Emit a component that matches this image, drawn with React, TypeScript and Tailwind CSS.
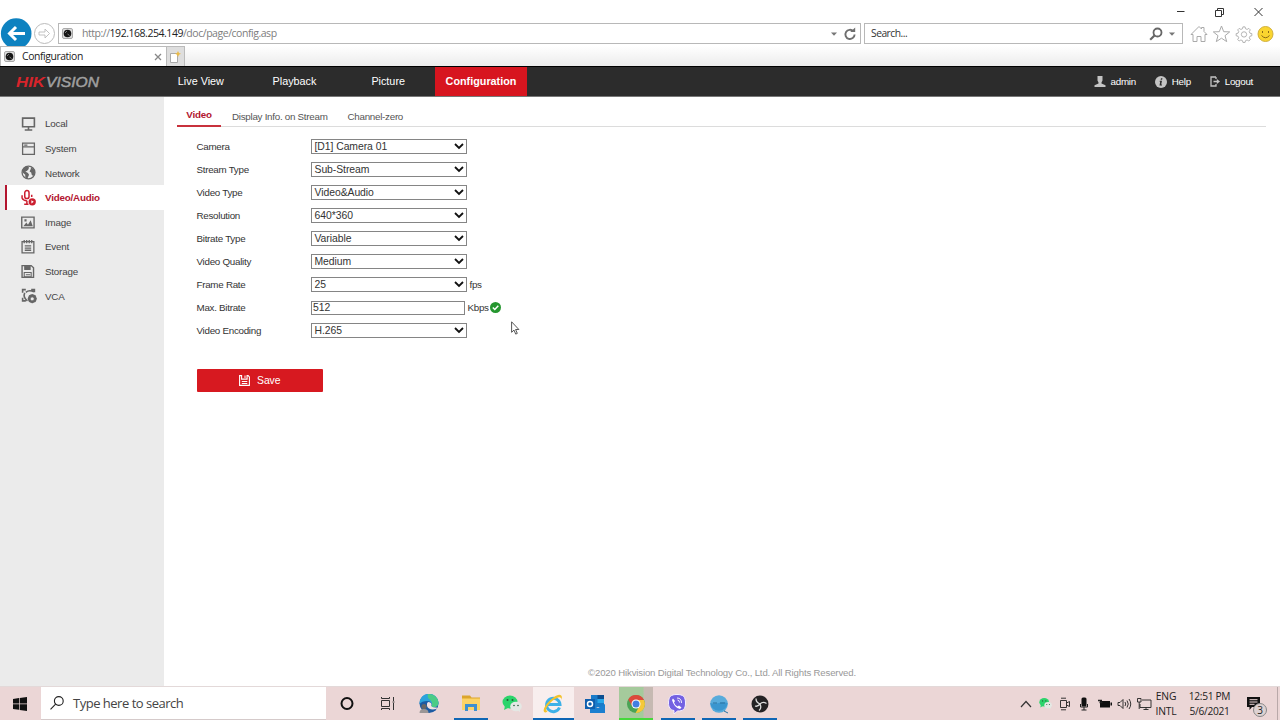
import React from 'react';

const arial = "font-['Liberation_Sans',Arial,sans-serif]";
const segoe = "font-['Open_Sans','Noto_Sans',sans-serif]";

const Favicon: React.FC = () => (
  <svg width="11" height="11" viewBox="0 0 11 11" className="shrink-0">
    <rect x=".5" y=".5" width="10" height="10" rx="1.5" fill="#ddd" stroke="#aaa" />
    <circle cx="5.5" cy="5.5" r="3.8" fill="#161616" />
    <path d="M3 5l2-2M5.5 6l2 1.5" stroke="#999" strokeWidth=".8" />
  </svg>
);

const Caret: React.FC = () => (
  <svg width="6" height="4" viewBox="0 0 6 4">
    <path d="M0 .5h6L3 3.8z" fill="#777" />
  </svg>
);

const TitleBar: React.FC = () => (
  <div className="flex h-[23px] items-center justify-end">
    <svg width="104" height="23" viewBox="0 0 104 23" fill="none" stroke="#333" strokeWidth="1">
      <path d="M1 11.500h7.500" />
      <path d="M39.500 10.500h6v6h-6zM41.500 10.500v-2h6v6h-2" />
      <path d="M78.500 8l8 8M86.500 8l-8 8" />
    </svg>
  </div>
);

const AddressBar: React.FC = () => (
  <div className="flex h-[23px] items-start">
    <div className="relative h-[23px] w-[58px] shrink-0 overflow-visible">
      <svg width="58" height="28" viewBox="0 0 58 28" fill="none" className="absolute left-0 -top-[5px] h-7">
        <circle cx="16.200" cy="15.500" r="15.300" fill="#0e82c0" />
        <path d="M25 15.500H10M16 9l-6.500 6.500L16 22" stroke="#fff" strokeWidth="3" />
        <circle cx="44.500" cy="15.500" r="10" stroke="#bbb" strokeWidth="1" />
        <path d="M39 14h6v-3l4.500 4.500-4.500 4.500v-3h-6z" stroke="#bbb" strokeWidth=".9" />
      </svg>
    </div>
    <div className="flex h-[21px] w-[803px] shrink-0 items-center border border-[#b8b8b8] bg-white pl-[3px]">
      <Favicon />
      <span className="ml-[9px] flex-1 whitespace-nowrap text-[10.500px] tracking-[-0.044em] text-[#7d7d7d]">
        http://<span className="text-[#222]">192.168.254.149</span>/doc/page/config.asp
      </span>
      <Caret />
      <svg width="14" height="14" viewBox="0 0 14 14" fill="none" className="mr-[3px] ml-1.5">
        <path d="M10.300 4.200A4.600 4.600 0 1 0 11.600 7.500" stroke="#6f6f6f" strokeWidth="1.900" />
        <path d="M7.200 5h5V.5z" fill="#6f6f6f" />
      </svg>
    </div>
    <div className="ml-[3px] flex h-[21px] w-[319px] shrink-0 items-center border border-[#b8b8b8] bg-white pl-1.5">
      <span className="flex-1 text-[10.300px] tracking-[-0.050em] text-[#333]">Search...</span>
      <svg width="14" height="14" viewBox="0 0 14 14" fill="none" stroke="#666">
        <circle cx="8.500" cy="5.500" r="4" strokeWidth="1.800" />
        <path d="M5.500 8.500L1.200 12.700" strokeWidth="2.200" />
      </svg>
      <span className="mr-[7px] ml-1.5">
        <Caret />
      </span>
    </div>
    <svg width="90" height="22" viewBox="0 0 90 22" fill="none" stroke="#aaa" strokeWidth="1" className="ml-1.5">
      <path d="M2 11.500l8-8 2.500 2.500V4.500h2.500v4l3 3h-2v7h-4v-5h-4v5H4v-7z" />
      <path d="M32.500 3l2.200 5.700 6 .2-4.700 3.800 1.700 5.900-5.200-3.400-5.200 3.400 1.700-5.900-4.700-3.800 6-.2z" />
      <g transform="translate(6.500 1.200) scale(.89)">
        <path d="M53.300 3h2.400l.5 2.100 1.800.8 1.900-1.200 1.700 1.700-1.200 1.900.8 1.800 2.100.5v2.400l-2.100.5-.8 1.800 1.200 1.900-1.700 1.700-1.900-1.200-1.800.8-.5 2h-2.400l-.5-2-1.800-.8-1.900 1.200-1.700-1.700 1.200-1.900-.8-1.800-2.100-.5v-2.400l2.100-.5.8-1.800-1.200-1.900 1.700-1.700 1.900 1.200 1.800-.8z" />
        <circle cx="54.500" cy="11.500" r="3" />
      </g>
      <circle cx="76.500" cy="11" r="7.500" fill="#fad52f" stroke="#d0b040" />
      <path d="M73.500 8v2M79.500 8v2M72.500 12.500q4 4.500 8 0" stroke="#8a6a16" />
    </svg>
  </div>
);

const BrowserTabs: React.FC = () => (
  <div className="relative flex h-5 bg-gradient-to-b from-white to-[#ececec]">
    <div className="flex w-[166px] items-center border-t border-l border-[#bbb] bg-white pl-[3px]">
      <Favicon />
      <span className="ml-[7px] flex-1 text-[10.400px] tracking-[-0.040em] text-[#222]">Configuration</span>
      <svg width="8" height="8" viewBox="0 0 8 8" className="mr-1" stroke="#888" strokeWidth="1.300">
        <path d="M1 1l6 6M7 1L1 7" />
      </svg>
    </div>
    <div className="flex w-[19px] items-center justify-center border border-b-0 border-[#bbb] bg-[#dedede]">
      <svg width="11" height="12" viewBox="0 0 11 12">
        <path d="M.5 2.500h7v9h-7z" fill="#fff" stroke="#aaa" />
        <path d="M8 0l1 2 2 .8-2 1L8 6 7 3.800l-2-1L7 2z" fill="#eabb48" />
      </svg>
    </div>
  </div>
);

const navItems = ['Live View', 'Playback', 'Picture'];

const NavBar: React.FC = () => (
  <div className={`flex h-[31px] items-stretch border-t border-b border-t-black border-b-[#777] bg-[#2c2c2c] text-white ${arial}`}>
    <svg width="154" height="29" viewBox="0 0 154 29" className="shrink-0">
      <g fontFamily="Liberation Sans, Arial, sans-serif" fontSize="15.500" fontStyle="italic">
        <text x="16" y="20" fill="#d8242b" fontWeight="bold" textLength="29" lengthAdjust="spacingAndGlyphs">HIK</text>
        <text x="46" y="20" fill="#a0a0a0" stroke="#a0a0a0" strokeWidth=".5" textLength="53" lengthAdjust="spacingAndGlyphs">VISION</text>
      </g>
    </svg>
    <div className="flex w-[281px] text-[10.800px]">
      {navItems.map((item) => (
        <div key={item} className="flex flex-1 items-center justify-center">{item}</div>
      ))}
    </div>
    <div className="flex w-[92px] items-center justify-center bg-[#d7151f] text-[10.800px] font-bold">Configuration</div>
    <div className="ml-auto flex items-center pr-[27px] text-[9.800px] tracking-[-0.030em]">
      <svg width="12" height="11" viewBox="0 0 12 11" fill="#c4c4c4">
        <path d="M3.500 0h5v4.500L7.500 6.500v1l4 1.700V11H.5V9.200l4-1.700v-1L3.500 4.500z" />
      </svg>
      <span className="ml-[5px] pt-px">admin</span>
      <svg width="12" height="12" viewBox="0 0 12 12" className="ml-[19px]">
        <circle cx="6" cy="6" r="6" fill="#c4c4c4" />
        <path d="M6 2.200h1.500l-.4 1.500H5.600zM4.800 4.700H7l-.8 3.800h.8v1H4.500l.7-3.800h-.6z" fill="#2c2c2c" />
      </svg>
      <span className="ml-[5px] pt-px">Help</span>
      <svg width="10" height="11" viewBox="0 0 10 11" fill="none" stroke="#c4c4c4" strokeWidth="1.300" className="ml-[19px]">
        <path d="M6 1H1v9h5V8M6 1v2M3.500 5.500h4" />
        <path d="M6.800 3L10 5.500 6.800 8z" fill="#c4c4c4" stroke="none" />
      </svg>
      <span className="ml-[5px] pt-px">Logout</span>
    </div>
  </div>
);

const sideItems = [
  {
    label: 'Local',
    icon: <path d="M1.500 2h11v8h-11zM7 10v2.500M3.500 13h7" strokeWidth="1.500" />,
  },
  {
    label: 'System',
    icon: <path d="M1.500 2h11v10.500h-11zM1.500 5.500h11M3 3.800h3" strokeWidth="1.200" />,
  },
  {
    label: 'Network',
    icon: (
      <>
        <circle cx="7" cy="7" r="6" strokeWidth="1.200" />
        <path d="M1.500 4.500L4.500 1.500l3 .5-.5 2L5.500 5.500 4 6l2.500 1.500 1 1.500-1.500 3.500Q3.500 12 4 9L1.500 7zM9.500 2l3 2.500.5 3-1.500 3-1.500-1.500-.5-2L8 6l1-2z" fill="currentColor" stroke="none" />
      </>
    ),
  },
  {
    label: 'Video/Audio',
    icon: (
      <>
        <rect x="3.500" y=".5" width="4" height="7.500" rx="2" strokeWidth="1.400" />
        <path d="M1 5v2.500q1 2.500 4.500 2.500M10 4.500v2M5.500 10v3M3 13.200h4" strokeWidth="1.400" />
        <circle cx="10.500" cy="11" r="3.400" fill="currentColor" stroke="none" />
        <path d="M9.700 9.500v3l2.200-1.500z" fill="#fff" stroke="none" />
      </>
    ),
  },
  {
    label: 'Image',
    icon: (
      <>
        <path d="M.700 2h11.500v10H.700z" strokeWidth="1.300" />
        <path d="M2.200 10.500L5 7l1.500 2L9 5l2 5.500zM3.200 4h2v2h-2z" fill="currentColor" stroke="none" />
      </>
    ),
  },
  {
    label: 'Event',
    icon: <path d="M1 2.500h11v10.500H1zM3 1v3M5.300 1v3M7.700 1v3M10 1v3M3.500 6.500h6M3.500 8.500h6M3.500 10.500h6" strokeWidth="1.200" />,
  },
  {
    label: 'Storage',
    icon: (
      <>
        <path d="M1 1.500h8.500l2.200 2v9H1z" strokeWidth="1.300" />
        <path d="M3.500 2h5v3h-5z" fill="currentColor" />
        <path d="M3 8h6.500v4H3zM4.500 10h4" strokeWidth="1" />
      </>
    ),
  },
  {
    label: 'VCA',
    icon: (
      <>
        <path d="M4.500 1.500H1.500v3M9.500 1.500h3v2.500M1.500 9v3h3M4.500 4q3-2.500 7.500-.5M3.500 4.500q-2 4 2.500 7.500" strokeWidth="1.500" />
        <circle cx="10.500" cy="10" r="3" strokeWidth="2.200" />
        <path d="M10.500 5.800v8.400M6.300 10h8.400M7.500 7l6 6M13.500 7l-6 6" strokeWidth="1" />
        <circle cx="10.500" cy="10" r="1.400" fill="#ebebeb" stroke="none" />
      </>
    ),
  },
];

const Sidebar: React.FC = () => (
  <div className="w-[164px] shrink-0 bg-[#ebebeb] pt-[14.500px] pl-[5px] text-[9.800px] tracking-[-0.020em]">
    {sideItems.map(({ label, icon }) => {
      const active = label === 'Video/Audio';
      return (
        <div
          key={label}
          className={`flex h-[24.600px] items-center border-l-2 pl-[14px] ${
            active ? 'border-[#b3152f] bg-white font-bold text-[#b3152f]' : 'border-transparent text-[#444]'
          }`}
        >
          <svg
            width="15"
            height="15"
            viewBox="0 0 14 14"
            fill="none"
            stroke="currentColor"
            className={active ? 'overflow-visible text-[#cb1f30]' : 'overflow-visible text-[#666]'}
          >
            {icon}
          </svg>
          <span className={active ? 'ml-[9px] pt-px' : 'ml-[9px] pt-[2px]'}>{label}</span>
        </div>
      );
    })}
  </div>
);

const fields = [
  { label: 'Camera', value: '[D1] Camera 01' },
  { label: 'Stream Type', value: 'Sub-Stream' },
  { label: 'Video Type', value: 'Video&Audio' },
  { label: 'Resolution', value: '640*360' },
  { label: 'Bitrate Type', value: 'Variable' },
  { label: 'Video Quality', value: 'Medium' },
  { label: 'Frame Rate', value: '25', unit: 'fps' },
  { label: 'Max. Bitrate', value: '512', unit: 'Kbps', input: true },
  { label: 'Video Encoding', value: 'H.265' },
];

const Content: React.FC = () => (
  <div className="flex flex-1 flex-col bg-white">
    <div className="mr-[14px] ml-[13px] flex h-[30px] border-b border-[#dcdcdc] text-[9.800px] tracking-[-0.028em] text-[#555]">
      <div className="-mb-px flex w-[44px] items-center justify-center border-b-2 border-[#c8313c] pt-[9px] font-bold tracking-[-0.020em] text-[#b3152f]">Video</div>
      <div className="ml-[11px] pt-[14px] leading-3">Display Info. on Stream</div>
      <div className="ml-5 pt-[14px] leading-3">Channel-zero</div>
    </div>
    <div className="pt-2 pl-[32.500px] text-[9.800px] tracking-[-0.028em] text-[#333]">
      {fields.map(({ label, value, unit, input }) => (
        <div key={label} className="flex h-[23px] items-center">
          <span className="w-[114.500px] pt-px">{label}</span>
          {input ? (
            <div className="flex h-[14px] w-[154px] items-center border border-[#858585] pl-px text-[10.400px] tracking-normal">{value}</div>
          ) : (
            <div className="flex h-[15px] w-[156px] items-center justify-between border border-[#858585] pr-[2px] pl-[2.500px] text-[10.400px] tracking-[-0.005em]">
              {value}
              <svg width="10" height="7" viewBox="0 0 10 7" fill="none" stroke="#111" strokeWidth="1.800" className="mb-px">
                <path d="M1 1l4 4 4-4" />
              </svg>
            </div>
          )}
          {unit && <span className="ml-[2.500px] pt-px">{unit}</span>}
          {input && (
            <svg width="11" height="11" viewBox="0 0 11 11" className="ml-[1.500px]">
              <circle cx="5.500" cy="5.500" r="5.500" fill="#25962f" />
              <path d="M2.800 5.500l2 2 3.500-3.700" fill="none" stroke="#fff" strokeWidth="1.500" />
            </svg>
          )}
        </div>
      ))}
      <button className="mt-[27px] flex h-[23px] w-[126.500px] items-center justify-center gap-[7px] rounded-[1px] bg-[#d71920] text-[10.400px] tracking-[-0.010em] text-white">
        <svg width="11" height="11" viewBox="0 0 11 11" fill="none" stroke="#fff">
          <path d="M.6.6h2v3.500h5.500V.6h1l1.300 1.300v8.500H.6z" strokeWidth="1.100" />
          <path d="M6 .5v2.500M2.800 6.500h5.500M2.800 8.500h5.500" />
        </svg>
        Save
      </button>
    </div>
    <div className="mt-auto pb-[6px] text-center text-[9.600px] leading-[14px] tracking-[-0.016em] text-[#999]">
      ©2020 Hikvision Digital Technology Co., Ltd. All Rights Reserved.
    </div>
  </div>
);

const WeChat: React.FC<{ size: number }> = ({ size }) => (
  <svg width={size} height={size} viewBox="0 0 20 20">
    <ellipse cx="8" cy="8" rx="7.500" ry="6.500" fill="#2bd46b" />
    <path d="M3 12l-1 4 4-2z" fill="#2bd46b" />
    <ellipse cx="14" cy="12.500" rx="5.800" ry="4.800" fill="#e4e8e4" />
    <path d="M15 16l3 2v-3z" fill="#e4e8e4" />
    <g fill="#235c38">
      <circle cx="5.500" cy="6" r="1" />
      <circle cx="10.500" cy="6" r="1" />
      <circle cx="12" cy="11.500" r=".8" />
      <circle cx="16" cy="11.500" r=".8" />
    </g>
  </svg>
);

const apps = [
  {
    name: 'cortana',
    icon: <circle cx="10" cy="9.500" r="5.500" fill="none" stroke="#111" strokeWidth="2" />,
  },
  {
    name: 'taskview',
    icon: <path d="M3.500 6.500h8v6h-8zM3.500 3v1.500h8V3M3.500 16v-1.500h8V16M15.500 3v4M15.500 9v7M14.500 8h2" fill="none" stroke="#333" />,
  },
  {
    name: 'edge',
    icon: (
      <>
        <circle cx="10" cy="9.500" r="9.500" fill="#1c5ba3" />
        <path d="M.5 10A9.500 9.500 0 0 1 19.500 8.500c0 4-3 5.500-7.500 4.500 2-3 0-6-4-6Q3 7 .5 10z" fill="#2ba3dc" />
        <path d="M9 .1A9.500 9.500 0 0 1 19.500 8.500c0 4-3 5.500-7.500 4.500 2-3 1-6-2-8Q8 3 9 .1z" fill="#4bcb86" />
        <path d="M9 8q3.500 0 3.500 2.500-1.500 3.500 5.500 3l-.5 1.500q-8 1.500-9.500-3Q7.500 9 9 8z" fill="#f0e2e2" />
        <circle cx="5" cy="12.500" r="2.600" fill="#666" />
        <path d="M.5 19q0-4 4.500-4t4.500 4z" fill="#9a9696" />
      </>
    ),
  },
  {
    name: 'explorer',
    line: true,
    icon: (
      <>
        <path d="M1 1.500h8l1.500 2H19v12H1z" fill="#dca52d" />
        <path d="M1 4.500h18V16H1z" fill="#fcd366" />
        <path d="M4 10h12v7h-3v-4H7v4H4z" fill="#3d8fd0" />
      </>
    ),
  },
  { name: 'wechat', icon: null },
  {
    name: 'ie',
    line: true,
    icon: (
      <>
        <path d="M16.500 13.500a6.700 6.700 0 1 1 .5-3H5" fill="none" stroke="#3db1e8" strokeWidth="3" />
        <path d="M2 18.500Q-1.500 17 4 9.500 10 2.500 15 1q5-1 3.500 5Q18.500 2.500 15 3.500 9 6 5 11.500 1 17.500 5 16.500 3.500 19 2 18.500z" fill="#f3c22c" />
      </>
    ),
  },
  {
    name: 'outlook',
    icon: (
      <>
        <path d="M6 1h13v12H6z" fill="#1a7bc9" />
        <path d="M12.500 1H19v4h-6.500z" fill="#0d4f91" />
        <path d="M12.500 5H19v4h-6.500z" fill="#28a8ea" />
        <path d="M5 10l8 4 7-4v9H5z" fill="#1b7fd0" />
        <path d="M0 5h10v10H0z" fill="#0f5fae" />
        <circle cx="5" cy="10" r="2.500" fill="none" stroke="#fff" strokeWidth="1.500" />
      </>
    ),
  },
  {
    name: 'chrome',
    line: true,
    icon: (
      <>
        <circle cx="10" cy="10" r="9" fill="#4aa455" />
        <path d="M2.200 5.500A9 9 0 0 1 18 6h-8L6 12z" fill="#dc4a3c" />
        <path d="M18 6a9 9 0 0 1-8.500 13l4-7-3.500-6z" fill="#f5c83a" />
        <circle cx="10" cy="10" r="4.500" fill="#fff" />
        <circle cx="10" cy="10" r="3.500" fill="#427fe0" />
      </>
    ),
  },
  {
    name: 'viber',
    line: true,
    icon: (
      <>
        <path d="M10 .5c6 0 8.500 2 8.500 8.500S16 17 10.500 17L7 20v-3.500C3 16 1.500 13 1.500 9 1.500 2.500 4 .5 10 .5z" fill="#7361e2" stroke="#f4efff" />
        <path d="M6 4.500l2 2.500-1 1.500q1 3 3.500 4l1.500-1 2.500 2-1.500 1.500Q7 13.500 5 6z" fill="#fff" />
        <path d="M10 4q4.500 0 4.500 5M10.500 6q2 0 2 2.500" fill="none" stroke="#fff" strokeWidth=".9" />
      </>
    ),
  },
  {
    name: 'player',
    line: true,
    icon: (
      <>
        <circle cx="10" cy="10" r="8.800" fill="#58abdb" />
        <path d="M1.200 9q4 1.500 8.500 0t9 0a8.800 8.800 0 0 1-17.500 0z" fill="#3a96cf" />
        <path d="M4 9h4M11 9h5M15 17l4 2" stroke="#2b72a0" strokeWidth="1" />
      </>
    ),
  },
  {
    name: 'obs',
    line: true,
    icon: (
      <>
        <circle cx="10" cy="10" r="8.500" fill="#242224" />
        <path d="M6 4.500q0 4 4 5.500M16.500 9.500q-3.500-2.500-6.500.5M9 16.500q3-2.500 1-6.500M5 12q2.500 1 5-2" fill="none" stroke="#ddd" strokeWidth="1.300" />
      </>
    ),
  },
];

const Taskbar: React.FC = () => (
  <div className="flex h-[34px] border-t border-[#e3d9d9] bg-[#ebd6d6]">
    <div className="flex w-[41px] shrink-0 items-center justify-center">
      <svg width="14" height="14" viewBox="0 0 14 14" fill="#111" className="mr-px">
        <path d="M0 2l6-.9v5.500H0zM6.700 1L14 0v6.600H6.700zM0 7.300h6v5.500L0 12zM6.700 7.300H14V14l-7.300-1z" />
      </svg>
    </div>
    <div className="flex w-[285px] shrink-0 items-center border-b border-[#d5caca] bg-white pl-[9px]">
      <svg width="14" height="14" viewBox="0 0 14 14" fill="none" stroke="#222" strokeWidth="1.100">
        <circle cx="8.800" cy="5" r="4.400" />
        <path d="M5.600 8.200L.5 13.300" />
      </svg>
      <span className="ml-[9px] pt-px text-[13px] tracking-[-0.038em] text-[#444]">Type here to search</span>
    </div>
    <div className="flex">
      {apps.map(({ name, icon, line }) => (
        <div
          key={name}
          className={`relative flex w-[41.350px] items-center justify-center ${name === 'ie' ? 'bg-[#f8eeee]' : ''}`}
        >
          {name === 'chrome' && (
            <div className="absolute inset-y-0 left-[4px] w-[34px] bg-gradient-to-r from-[#a5ca9c] from-70% to-[#c6b9b2] to-75%" />
          )}
          {icon ? (
            <svg width="20" height="20" viewBox="0 0 20 20" className="relative">{icon}</svg>
          ) : (
            <WeChat size={20} />
          )}
          {line && (
            <div
              className={`absolute bottom-0 h-[2px] ${
                name === 'chrome' ? 'left-[4px] w-[34px] bg-[#45d83b]' : name === 'ie' ? 'inset-x-0 bg-[#0e66b5]' : 'left-[4px] w-[34px] bg-[#0e66b5]'
              }`}
            />
          )}
        </div>
      ))}
    </div>
    <div className="ml-auto flex items-center text-[#222]">
      <svg width="12" height="8" viewBox="0 0 12 8" fill="none" stroke="#333" strokeWidth="1.200">
        <path d="M1 7l5-5.500L11 7" />
      </svg>
      <span className="ml-[7px]">
        <WeChat size={13} />
      </span>
      <svg width="98" height="16" viewBox="-2 0 98 16" fill="none" stroke="#222" className="ml-[5px]">
        <path d="M1.500 4.500h6v7h-6zM7.500 7l3-1.500v5l-3-1.500M2 2.200h5M2 13.800h5" strokeWidth=".9" />
        <rect x="22.500" y="1.500" width="5" height="9" rx="1.500" fill="#111" stroke="none" />
        <path d="M21.500 8v3h7V8M25 11v3M22.500 14h5" />
        <path d="M41 5h10v6.500H41zM51.500 6.500h1.500v3h-1.500z" fill="#111" stroke="none" />
        <path d="M39 4.500h4M40.500 6.500h3" strokeWidth="1.500" />
        <path d="M59 6.500h2l3-3v9l-3-3h-2zM66 6q1.500 2 0 4M68 4.500q2.500 3.500 0 7M70 3q3.500 5 0 10" strokeWidth=".9" />
        <path d="M83 4h9v7.500H81V8M84.500 13.500h5M87 11.500v2M78.500 2.500h3.500V6h-3.500zM80.200 6v7" strokeWidth=".9" />
      </svg>
      <div className="w-[22px] text-center text-[10.300px] leading-[15px] tracking-[-0.020em]">
        <div>ENG</div>
        <div>INTL</div>
      </div>
      <div className="ml-[11px] w-[43px] text-center text-[10.200px] leading-[15px] tracking-[-0.030em] whitespace-nowrap">
        <div>12:51 PM</div>
        <div>5/6/2021</div>
      </div>
      <div className="relative ml-4 h-[33px] w-[31px] border-r border-[#b9a9a9]">
        <svg width="14" height="14" viewBox="0 0 14 14" className="absolute top-[10px] left-0">
          <path d="M0 0h13v10H5l-2.500 3V10H0z" fill="#111" />
          <path d="M2.500 2.700h8M2.500 5h8M2.500 7.300h5" stroke="#ebd6d6" />
        </svg>
        <span className="absolute top-[16px] left-[6px] flex size-[14px] items-center justify-center rounded-full border border-[#888] bg-[#ddd2d2] text-[10px] text-[#222]">
          3
        </span>
      </div>
      <div className="w-[2px]" />
    </div>
  </div>
);

export default function App() {
  return (
    <div className={`relative flex h-[720px] w-[1280px] flex-col overflow-hidden bg-white ${segoe}`}>
      <TitleBar />
      <AddressBar />
      <BrowserTabs />
      <NavBar />
      <div className={`flex min-h-0 flex-1 ${arial}`}>
        <Sidebar />
        <Content />
      </div>
      <Taskbar />
      {/* mouse pointer */}
      <svg width="9" height="14" viewBox="0 0 9 14" className="absolute top-[321px] left-[511px]">
        <path d="M.6.8v10.500l2.400-2.200 1.700 4 1.600-.7-1.700-3.900h3.300z" fill="#fff" stroke="#444" strokeWidth=".9" />
      </svg>
    </div>
  );
}
